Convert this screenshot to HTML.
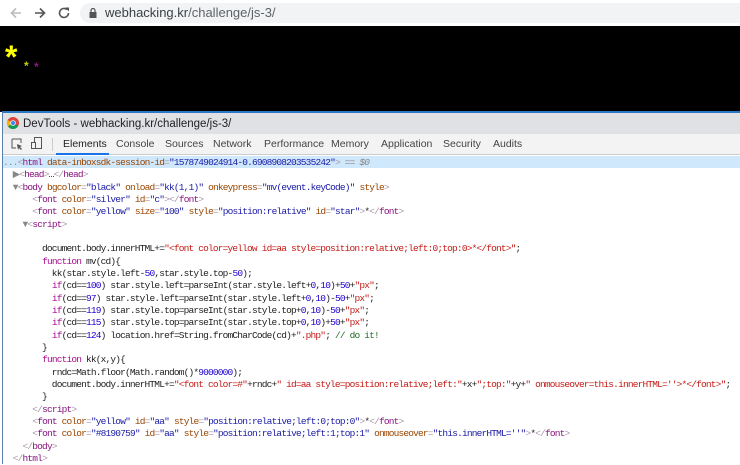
<!DOCTYPE html>
<html><head><meta charset="utf-8"><style>
*{margin:0;padding:0;box-sizing:border-box}
body{width:740px;height:464px;overflow:hidden;background:#fff;font-family:"Liberation Sans",sans-serif;position:relative}
.top{position:absolute;left:0;top:0;width:740px;height:26px;background:#fff}
.pill{position:absolute;left:80px;top:3px;width:680px;height:20px;border-radius:10px;background:#f1f3f4}
.url{position:absolute;left:105px;top:5px;font-size:13px;color:#3c4043}
.url span{color:#5f6368}
.blk{position:absolute;left:0;top:26px;width:740px;height:86px;background:#000}
.dt{position:absolute;left:2px;top:111px;width:738px;height:353px;background:#fff;border-top:2px solid #2b76c5;border-left:1px solid #5a7fa8}
.title{height:21px;background:#dfe1e5;font-size:11.5px;color:#202124;padding:5px 0 0 20px;position:relative}
.tabs{height:21px;background:#f3f3f3;border-bottom:1px solid #ccc;position:relative;font-size:10.5px;color:#444}
.tabs span{position:absolute;top:4px}
.sel{position:absolute;left:0;top:43px;width:738px;height:12px;background:#cfe8fc}
.code{position:absolute;left:0;top:44px;font-family:"Liberation Mono",monospace;font-size:9.5px;letter-spacing:-0.82px;line-height:12.33px;white-space:pre;color:#222}
.t{color:#881280}.b{color:#a894a6}.a{color:#994500}.v{color:#1a1aa6}.k{color:#aa0d91}.s{color:#c41a16}.n{color:#1c00cf}.c{color:#236e25}.g{color:#888}
</style></head><body>
<div class="top">
<svg style="position:absolute;left:9px;top:6px" width="14" height="14" viewBox="0 0 14 14"><path d="M12 7H3M7 2.5L2.5 7 7 11.5" stroke="#bbb" stroke-width="1.6" fill="none"/></svg>
<svg style="position:absolute;left:33px;top:6px" width="14" height="14" viewBox="0 0 14 14"><path d="M2 7h9M7 2.5L11.5 7 7 11.5" stroke="#555" stroke-width="1.6" fill="none"/></svg>
<svg style="position:absolute;left:57px;top:6px" width="14" height="14" viewBox="0 0 14 14"><path d="M11.5 7A4.5 4.5 0 1 1 10 3.6" stroke="#555" stroke-width="1.6" fill="none"/><path d="M8 1.5h4v4z" fill="#555"/></svg>
<div class="pill"></div>
<svg style="position:absolute;left:89px;top:8px" width="8" height="10" viewBox="0 0 8 10"><rect x="0.5" y="4" width="7" height="6" fill="#555"/><path d="M2 4V2.5a2 2 0 0 1 4 0V4" stroke="#555" stroke-width="1.2" fill="none"/></svg>
<div class="url">webhacking.kr<span>/challenge/js-3/</span></div>
</div>
<div class="blk">
<div style="position:absolute;left:5px;top:16px;color:#ff0;font-size:32px;font-weight:bold;line-height:30px">*</div>
<div style="position:absolute;left:24px;top:33px;color:#cc0;font-size:12px;font-weight:bold">*</div>
<div style="position:absolute;left:34px;top:34px;color:#8a1a80;font-size:12px;font-weight:bold">*</div>
</div>
<div class="dt">
<div class="title"><svg style="position:absolute;left:4px;top:4px" width="12" height="12" viewBox="0 0 12 12"><circle cx="6" cy="6" r="6" fill="#db4437"/><path d="M6 6L11.2 9A6 6 0 0 1 1 9.3z" fill="#0f9d58"/><path d="M6 6L1 9.3A6 6 0 0 1 .8 3z" fill="#f4b400"/><circle cx="6" cy="6" r="2.8" fill="#fff"/><circle cx="6" cy="6" r="2.1" fill="#4285f4"/></svg>DevTools - webhacking.kr/challenge/js-3/</div>
<div class="tabs">
<svg style="position:absolute;left:8px;top:4px" width="12" height="12" viewBox="0 0 12 12"><path d="M1 1h9v4M1 1v9h4" stroke="#555" fill="none"/><path d="M6 6l5 2-2 1 2 2-1 1-2-2-1 2z" fill="#555"/></svg>
<svg style="position:absolute;left:28px;top:3px" width="12" height="13" viewBox="0 0 12 13"><rect x="3.5" y="0.5" width="7" height="11" stroke="#555" fill="none"/><rect x="0.5" y="5.5" width="4" height="6" stroke="#555" fill="#f3f3f3"/></svg>
<div style="position:absolute;left:49px;top:4px;width:1px;height:13px;background:#ccc"></div>
<span style="left:60px;color:#222">Elements</span>
<div style="position:absolute;left:53px;top:19px;width:53px;height:2px;background:#1a73e8"></div>
<span style="left:113px">Console</span><span style="left:162px">Sources</span><span style="left:210px">Network</span><span style="left:261px">Performance</span><span style="left:328px">Memory</span><span style="left:378px">Application</span><span style="left:440px">Security</span><span style="left:490px">Audits</span>
</div>
<div class="sel"></div>
<div class="code"><span class="g">...</span><span class="b">&lt;</span><span class="t">html</span> <span class="a">data-inboxsdk-session-id</span><span class="b">=</span><span class="v">"1578749024914-0.6908908203535242"</span><span class="b">&gt;</span> <span class="g">== <i>$0</i></span>
  <span class="g">▶</span><span class="b">&lt;</span><span class="t">head</span><span class="b">&gt;</span>…<span class="b">&lt;/</span><span class="t">head</span><span class="b">&gt;</span>
  <span class="g">▼</span><span class="b">&lt;</span><span class="t">body</span> <span class="a">bgcolor</span><span class="b">=</span><span class="v">"black"</span> <span class="a">onload</span><span class="b">=</span><span class="v">"kk(1,1)"</span> <span class="a">onkeypress</span><span class="b">=</span><span class="v">"mv(event.keyCode)"</span> <span class="a">style</span><span class="b">&gt;</span>
      <span class="b">&lt;</span><span class="t">font</span> <span class="a">color</span><span class="b">=</span><span class="v">"silver"</span> <span class="a">id</span><span class="b">=</span><span class="v">"c"</span><span class="b">&gt;&lt;/</span><span class="t">font</span><span class="b">&gt;</span>
      <span class="b">&lt;</span><span class="t">font</span> <span class="a">color</span><span class="b">=</span><span class="v">"yellow"</span> <span class="a">size</span><span class="b">=</span><span class="v">"100"</span> <span class="a">style</span><span class="b">=</span><span class="v">"position:relative"</span> <span class="a">id</span><span class="b">=</span><span class="v">"star"</span><span class="b">&gt;</span>*<span class="b">&lt;/</span><span class="t">font</span><span class="b">&gt;</span>
    <span class="g">▼</span><span class="b">&lt;</span><span class="t">script</span><span class="b">&gt;</span>

        document.body.innerHTML+=<span class="s">"&lt;font color=yellow id=aa style=position:relative;left:0;top:0&gt;*&lt;/font&gt;"</span>;
        <span class="k">function</span> mv(cd){
          kk(star.style.left-<span class="n">50</span>,star.style.top-<span class="n">50</span>);
          <span class="k">if</span>(cd==<span class="n">100</span>) star.style.left=parseInt(star.style.left+<span class="n">0</span>,<span class="n">10</span>)+<span class="n">50</span>+<span class="s">"px"</span>;
          <span class="k">if</span>(cd==<span class="n">97</span>) star.style.left=parseInt(star.style.left+<span class="n">0</span>,<span class="n">10</span>)-<span class="n">50</span>+<span class="s">"px"</span>;
          <span class="k">if</span>(cd==<span class="n">119</span>) star.style.top=parseInt(star.style.top+<span class="n">0</span>,<span class="n">10</span>)-<span class="n">50</span>+<span class="s">"px"</span>;
          <span class="k">if</span>(cd==<span class="n">115</span>) star.style.top=parseInt(star.style.top+<span class="n">0</span>,<span class="n">10</span>)+<span class="n">50</span>+<span class="s">"px"</span>;
          <span class="k">if</span>(cd==<span class="n">124</span>) location.href=String.fromCharCode(cd)+<span class="s">".php"</span>; <span class="c">// do it!</span>
        }
        <span class="k">function</span> kk(x,y){
          rndc=Math.floor(Math.random()*<span class="n">9000000</span>);
          document.body.innerHTML+=<span class="s">"&lt;font color=#"</span>+rndc+<span class="s">" id=aa style=position:relative;left:"</span>+x+<span class="s">";top:"</span>+y+<span class="s">" onmouseover=this.innerHTML=''&gt;*&lt;/font&gt;"</span>;
        }
      <span class="b">&lt;/</span><span class="t">script</span><span class="b">&gt;</span>
      <span class="b">&lt;</span><span class="t">font</span> <span class="a">color</span><span class="b">=</span><span class="v">"yellow"</span> <span class="a">id</span><span class="b">=</span><span class="v">"aa"</span> <span class="a">style</span><span class="b">=</span><span class="v">"position:relative;left:0;top:0"</span><span class="b">&gt;</span>*<span class="b">&lt;/</span><span class="t">font</span><span class="b">&gt;</span>
      <span class="b">&lt;</span><span class="t">font</span> <span class="a">color</span><span class="b">=</span><span class="v">"#8190759"</span> <span class="a">id</span><span class="b">=</span><span class="v">"aa"</span> <span class="a">style</span><span class="b">=</span><span class="v">"position:relative;left:1;top:1"</span> <span class="a">onmouseover</span><span class="b">=</span><span class="v">"this.innerHTML=''"</span><span class="b">&gt;</span>*<span class="b">&lt;/</span><span class="t">font</span><span class="b">&gt;</span>
    <span class="b">&lt;/</span><span class="t">body</span><span class="b">&gt;</span>
  <span class="b">&lt;/</span><span class="t">html</span><span class="b">&gt;</span></div>
</div>
</body></html>
